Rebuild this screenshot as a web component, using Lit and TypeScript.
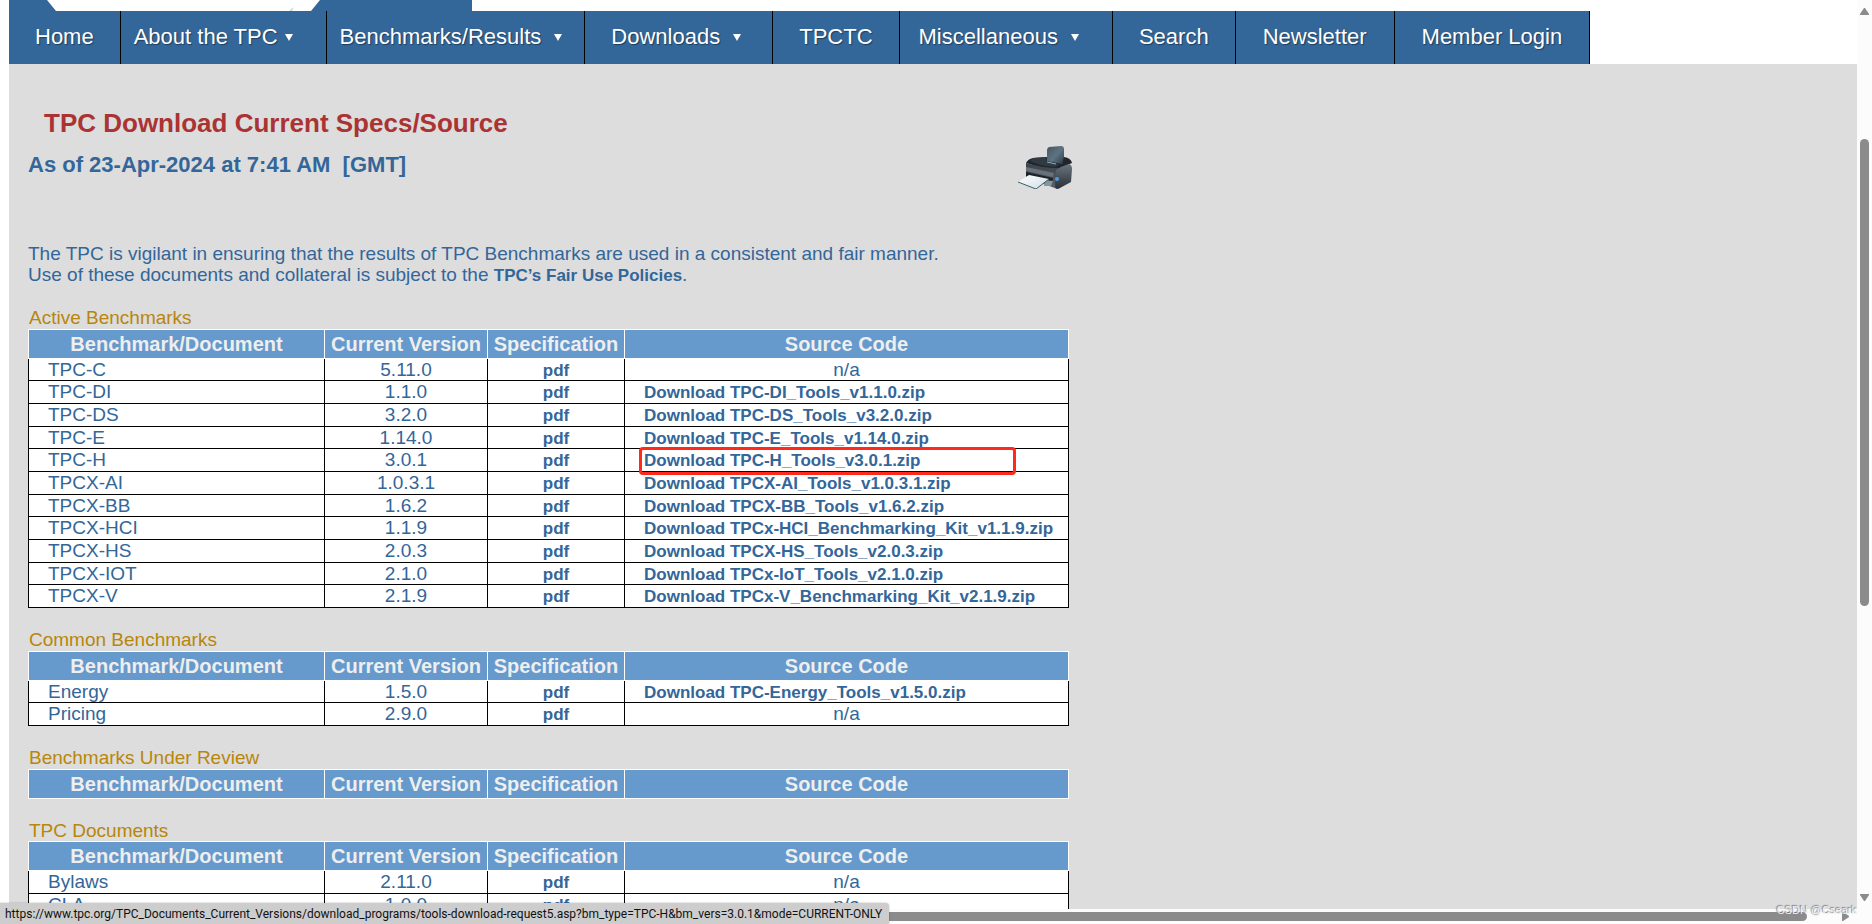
import { LitElement, html, css, svg, nothing } from "lit";
import { customElement, property } from "lit/decorators.js";

interface NavItem {
  label: string;
  menu?: boolean;
  kind?: string;
}

interface Row {
  name: string;
  version: string;
  source?: string;
  marked?: boolean;
}

const NAV: NavItem[] = [
  { label: "Home" },
  { label: "About the TPC", menu: true, kind: "snug tight" },
  { label: "Benchmarks/Results", menu: true, kind: "snug" },
  { label: "Downloads", menu: true, kind: "roomy" },
  { label: "TPCTC" },
  { label: "Miscellaneous", menu: true, kind: "medium" },
  { label: "Search" },
  { label: "Newsletter", kind: "wide" },
  { label: "Member Login", kind: "wide" },
];

const ACTIVE: Row[] = [
  { name: "TPC-C", version: "5.11.0" },
  { name: "TPC-DI", version: "1.1.0", source: "TPC-DI_Tools_v1.1.0.zip" },
  { name: "TPC-DS", version: "3.2.0", source: "TPC-DS_Tools_v3.2.0.zip" },
  { name: "TPC-E", version: "1.14.0", source: "TPC-E_Tools_v1.14.0.zip" },
  { name: "TPC-H", version: "3.0.1", source: "TPC-H_Tools_v3.0.1.zip", marked: true },
  { name: "TPCX-AI", version: "1.0.3.1", source: "TPCX-AI_Tools_v1.0.3.1.zip" },
  { name: "TPCX-BB", version: "1.6.2", source: "TPCX-BB_Tools_v1.6.2.zip" },
  { name: "TPCX-HCI", version: "1.1.9", source: "TPCx-HCI_Benchmarking_Kit_v1.1.9.zip" },
  { name: "TPCX-HS", version: "2.0.3", source: "TPCX-HS_Tools_v2.0.3.zip" },
  { name: "TPCX-IOT", version: "2.1.0", source: "TPCx-IoT_Tools_v2.1.0.zip" },
  { name: "TPCX-V", version: "2.1.9", source: "TPCx-V_Benchmarking_Kit_v2.1.9.zip" },
];

const COMMON: Row[] = [
  { name: "Energy", version: "1.5.0", source: "TPC-Energy_Tools_v1.5.0.zip" },
  { name: "Pricing", version: "2.9.0" },
];

const DOCUMENTS: Row[] = [
  { name: "Bylaws", version: "2.11.0" },
  { name: "CLA", version: "1.0.0" },
];

const printerIcon = svg`
  <defs>
    <linearGradient id="back" x1="0" y1="0" x2="1" y2="1">
      <stop offset="0" stop-color="#49545e"></stop>
      <stop offset="0.5" stop-color="#5d7484"></stop>
      <stop offset="1" stop-color="#2c333b"></stop>
    </linearGradient>
    <linearGradient id="front" x1="0" y1="0" x2="0" y2="1">
      <stop offset="0" stop-color="#3c424a"></stop>
      <stop offset="1" stop-color="#59616a"></stop>
    </linearGradient>
    <linearGradient id="side" x1="0" y1="0" x2="0" y2="1">
      <stop offset="0" stop-color="#6a737c"></stop>
      <stop offset="1" stop-color="#2a3037"></stop>
    </linearGradient>
    <linearGradient id="paper" x1="0" y1="0" x2="1" y2="1">
      <stop offset="0" stop-color="#ffffff"></stop>
      <stop offset="1" stop-color="#cfdde6"></stop>
    </linearGradient>
  </defs>
  <path d="M29 17 29 4Q29 2 31 1L43 0Q46 0 46 3L46 15 43 20Z" fill="url(#back)"></path>
  <path d="M8 17Q10 13 15 12L29 11 29 15 44 18 46 11Q53 12 54 17L40 23Q24 23 8 17Z" fill="#20262d"></path>
  <path d="M15 12 28 11 29 16 42 18 37 21Q22 20 12 15Z" fill="#303a43"></path>
  <path d="M8 17Q24 22 40 22L39 43 34 41 8 32Z" fill="url(#front)"></path>
  <path d="M8 21 36 27 35 31 8 25Z" fill="#68717a"></path>
  <path d="M8 26 35 32 34 37 8 30Z" fill="#1d2228"></path>
  <path d="M38 24Q44 20 51 18Q54 19 54 23L53 36 40 43Q37 43 37 39Z" fill="url(#side)"></path>
  <path d="M27 34 35 35 33 40 26 40Z" fill="#85969f"></path>
  <path d="M11 29 31 33 18 43 0 36Z" fill="url(#paper)"></path>
  <path d="M0 36 18 43 31 33" fill="none" stroke="#3c5d69"></path>
  <path d="M29 16 38 18" stroke="#97b2bf"></path>
  <circle cx="39" cy="33" r="2" fill="#4e9be0"></circle>`;

@customElement("spec-table")
export class SpecTable extends LitElement {
  @property() heading = "";
  @property({ attribute: false }) rows: Row[] = [];

  static styles = css`
    :host {
      display: block;
      margin-top: 21px;
    }
    table {
      width: 100%;
      table-layout: fixed;
      border-collapse: collapse;
      font-size: 19px;
      line-height: 1.14;
      color: #336699;
    }
    caption {
      text-align: left;
      padding-left: 1px;
      color: #b8860b;
    }
    .name { width: 296px; }
    .version { width: 163px; }
    .spec { width: 137px; }
    th {
      border: 1px solid #fff;
      background: #6699cc;
      color: #eee;
      font-size: 20px;
      line-height: 24px;
      padding: 2px 0;
      white-space: nowrap;
    }
    td {
      border: 1px solid #000;
      background: #fff;
      padding: 0;
      text-align: center;
      white-space: nowrap;
    }
    thead + tbody tr:first-child td { border-top-color: #fff; }
    .label,
    .file {
      text-align: left;
      padding-left: 19px;
    }
    .file { position: relative; }
    a {
      color: inherit;
      font-size: 17px;
      font-weight: bold;
      text-decoration: none;
    }
    a:hover { text-decoration: underline; }
    .mark {
      position: absolute;
      z-index: 1;
      inset: -2px 52px -4px 14px;
      border: 3px solid #ff2a1c;
      border-radius: 4px;
      pointer-events: none;
    }
  `;

  render() {
    return html`
      <table>
        <caption>${this.heading}</caption>
        <colgroup>
          <col class="name" /><col class="version" /><col class="spec" /><col />
        </colgroup>
        <thead>
          <tr>
            <th scope="col">Benchmark/Document</th>
            <th scope="col">Current Version</th>
            <th scope="col">Specification</th>
            <th scope="col">Source Code</th>
          </tr>
        </thead>
        ${this.rows.length
          ? html`<tbody>
              ${this.rows.map(
                (row) => html`<tr>
                  <td class="label">${row.name}</td>
                  <td>${row.version}</td>
                  <td><a href="#">pdf</a></td>
                  ${row.source
                    ? html`<td class="file"><a href="#">Download ${row.source}</a>${row.marked
                        ? html`<span class="mark"></span>`
                        : nothing}</td>`
                    : html`<td>n/a</td>`}
                </tr>`
              )}
            </tbody>`
          : nothing}
      </table>
    `;
  }
}

@customElement("app-root")
export class AppRoot extends LitElement {
  static styles = css`
    :host {
      display: grid;
      grid-template-columns: minmax(0, 1fr) 15px;
      grid-template-rows: minmax(0, 1fr) 15px;
      height: 100vh;
      position: relative;
      overflow: hidden;
      background: #fff;
      font-family: "Liberation Sans", Arial, sans-serif;
      color: #336699;
    }
    .viewport {
      overflow: hidden;
      padding-left: 9px;
    }
    .logo {
      display: block;
      width: 463px;
      height: 11px;
    }
    .nav {
      display: flex;
      list-style: none;
      margin: 0;
      padding: 0;
    }
    .nav li {
      background: #336699;
      border-right: 1px solid #000;
    }
    .nav a {
      display: flex;
      align-items: center;
      gap: 13px;
      height: 52px;
      padding: 0 26px 1px;
      color: #fff;
      font-size: 22px;
      text-decoration: none;
      text-shadow: 1px 1px 1px rgba(0, 0, 0, 0.4);
      white-space: nowrap;
    }
    .nav .snug { padding-left: 13px; padding-right: 22px; }
    .nav .tight { gap: 7px; padding-right: 33px; }
    .nav .roomy { padding-right: 31px; }
    .nav .medium { padding-left: 19px; padding-right: 33px; }
    .nav .wide { padding-left: 27px; padding-right: 27px; }
    .caret {
      width: 8px;
      height: 7px;
      fill: #fff;
    }
    .page {
      background: #ddd;
      min-height: 100vh;
      padding: 44px 19px;
    }
    .column { max-width: 1041px; }
    .top {
      display: flex;
      justify-content: space-between;
      align-items: end;
    }
    h1 {
      margin: 0 0 14px;
      padding-left: 16px;
      font-size: 26px;
      line-height: 30px;
      color: #aa3333;
    }
    h2 {
      margin: 0;
      font-size: 22px;
      line-height: 26px;
      white-space: pre;
    }
    .print {
      border: 0;
      padding: 0;
      margin: 0 -3px -11px 0;
      background: none;
      cursor: pointer;
    }
    .print svg {
      display: block;
      width: 54px;
      height: 43px;
    }
    .intro {
      margin: 65px 0 0;
      font-size: 19px;
      line-height: 21px;
    }
    .intro a {
      color: inherit;
      font-size: 17px;
      font-weight: bold;
      text-decoration: none;
    }
    .bar {
      display: flex;
      background: #fcfcfc;
    }
    .vertical {
      flex-direction: column;
      align-items: center;
      padding: 8px 0;
    }
    .horizontal {
      align-items: center;
      padding: 0 8px 0 9px;
    }
    .bar button {
      display: flex;
      border: 0;
      padding: 0;
      background: none;
    }
    .bar svg { fill: #8b8b8b; }
    .before { flex: 124; }
    .after { flex: 288; }
    .thumb {
      background: #8b8b8b;
      border-radius: 5px;
    }
    .vertical .thumb {
      flex: 467;
      width: 9px;
    }
    .horizontal .thumb {
      flex: 1;
      height: 9px;
      margin-right: 35px;
    }
    .corner { background: #fcfcfc; }
    .status {
      position: absolute;
      left: 0;
      bottom: 0;
      height: 21px;
      padding: 0 7px 0 5px;
      background: #cdcdcd;
      border-top-right-radius: 4px;
      box-shadow: 0 0 2px rgba(0, 0, 0, 0.3);
      color: #111;
      font-family: Roboto, "Noto Sans", sans-serif;
      font-size: 12px;
      line-height: 22px;
      white-space: nowrap;
    }
    .credit {
      position: absolute;
      right: 15px;
      bottom: 7px;
      color: #eee;
      font-size: 11px;
      line-height: 14px;
      text-shadow: -1px -1px 1px #777;
    }
  `;

  render() {
    return html`
      <div class="viewport">
        <svg class="logo" viewBox="0 0 463 11" aria-hidden="true">
          <path d="M0 0H38L47 11H0Z M311 0H463V11H302Z" fill="#336699"></path>
          <path d="M280 11 285 7 283 11Z" fill="#b8dce6"></path>
        </svg>
        <nav>
          <ul class="nav">
            ${NAV.map(
              (item) => html`<li>
                <a class=${item.kind ?? ""} href="#">${item.label}${item.menu
                  ? html`<svg class="caret" viewBox="0 0 8 7"><path d="M0 0H8L4 7Z"></path></svg>`
                  : nothing}</a>
              </li>`
            )}
          </ul>
        </nav>
        <main class="page">
          <div class="column">
            <header class="top">
              <div>
                <h1>TPC Download Current Specs/Source</h1>
                <h2>As of 23-Apr-2024 at 7:41 AM  [GMT]</h2>
              </div>
              <button class="print" aria-label="Print">
                <svg viewBox="0 0 54 43">${printerIcon}</svg>
              </button>
            </header>
            <p class="intro">
              The TPC is vigilant in ensuring that the results of TPC Benchmarks are used in a consistent and fair manner.<br />
              Use of these documents and collateral is subject to the <a href="#">TPC’s Fair Use Policies</a>.
            </p>
            <spec-table heading="Active Benchmarks" .rows=${ACTIVE}></spec-table>
            <spec-table heading="Common Benchmarks" .rows=${COMMON}></spec-table>
            <spec-table heading="Benchmarks Under Review" .rows=${[]}></spec-table>
            <spec-table heading="TPC Documents" .rows=${DOCUMENTS}></spec-table>
          </div>
        </main>
      </div>
      <div class="bar vertical">
        <button aria-label="Scroll up"><svg width="9" height="7"><path d="M4 0H5L9 6V7H0V6Z"></path></svg></button>
        <span class="before"></span>
        <span class="thumb"></span>
        <span class="after"></span>
        <button aria-label="Scroll down"><svg width="9" height="7"><path d="M0 0H9V1L5 7H4L0 1Z"></path></svg></button>
      </div>
      <div class="bar horizontal">
        <span class="thumb"></span>
        <button aria-label="Scroll right"><svg width="7" height="9"><path d="M0 0H1L7 4V5L1 9H0Z"></path></svg></button>
      </div>
      <div class="corner"></div>
      <div class="status">https://www.tpc.org/TPC_Documents_Current_Versions/download_programs/tools-download-request5.asp?bm_type=TPC-H&amp;bm_vers=3.0.1&amp;mode=CURRENT-ONLY</div>
      <div class="credit">CSDN @Cseark</div>
    `;
  }
}
